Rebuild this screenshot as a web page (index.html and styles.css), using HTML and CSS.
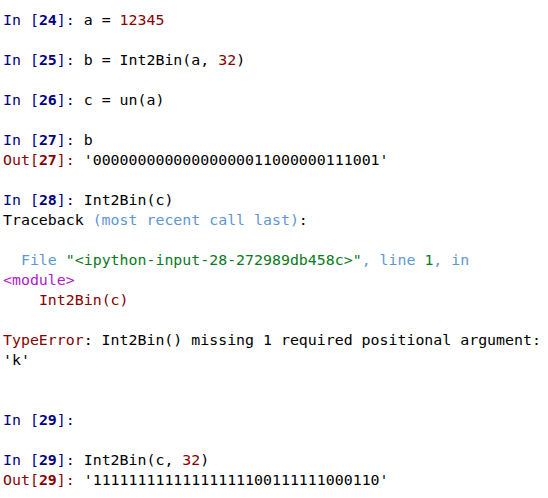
FILE: index.html
```html
<!DOCTYPE html>
<html>
<head>
<meta charset="utf-8">
<link rel="stylesheet" href="styles.css">
</head>
<body>
<pre class="console"><span class="pin">In [</span><span class="pin-n">24</span><span class="pin">]:</span> a = <span class="num">12345</span>

<span class="pin">In [</span><span class="pin-n">25</span><span class="pin">]:</span> b = Int2Bin(a, <span class="num">32</span>)

<span class="pin">In [</span><span class="pin-n">26</span><span class="pin">]:</span> c = un(a)

<span class="pin">In [</span><span class="pin-n">27</span><span class="pin">]:</span> b
<span class="pout">Out[</span><span class="pout-n">27</span><span class="pout">]:</span> '00000000000000000011000000111001'

<span class="pin">In [</span><span class="pin-n">28</span><span class="pin">]:</span> Int2Bin(c)
Traceback <span class="tb">(most recent call last)</span>:

  <span class="tb">File</span> <span class="grn">"&lt;ipython-input-28-272989db458c&gt;"</span><span class="tb">, line</span> <span class="grn">1</span><span class="tb">, in</span>
<span class="mod">&lt;module&gt;</span>
    <span class="err">Int2Bin(c)</span>

<span class="err">TypeError</span>: Int2Bin() missing 1 required positional argument:
'k'


<span class="pin">In [</span><span class="pin-n">29</span><span class="pin">]:</span>

<span class="pin">In [</span><span class="pin-n">29</span><span class="pin">]:</span> Int2Bin(c, <span class="num">32</span>)
<span class="pout">Out[</span><span class="pout-n">29</span><span class="pout">]:</span> '11111111111111111100111111000110'
</pre>
</body>
</html>
```
FILE: styles.css
```css
html, body {
  margin: 0;
  padding: 0;
  background: #ffffff;
}
.console {
  margin: 0;
  padding: 10px 0 0 3px;
  font-family: "DejaVu Sans Mono", "Liberation Mono", monospace;
  font-size: 14.9px;
  line-height: 20px;
  color: #000000;
  white-space: pre;
}
.pin { color: #000080; }
.pin-n { color: #000080; font-weight: bold; }
.pout { color: #8b0000; }
.pout-n { color: #8b0000; font-weight: bold; }
.num { color: #8b0000; }
.tb { color: #5f97d2; }
.grn { color: #0a7a22; }
.mod { color: #b020c8; }
.err { color: #8b0000; }
```
